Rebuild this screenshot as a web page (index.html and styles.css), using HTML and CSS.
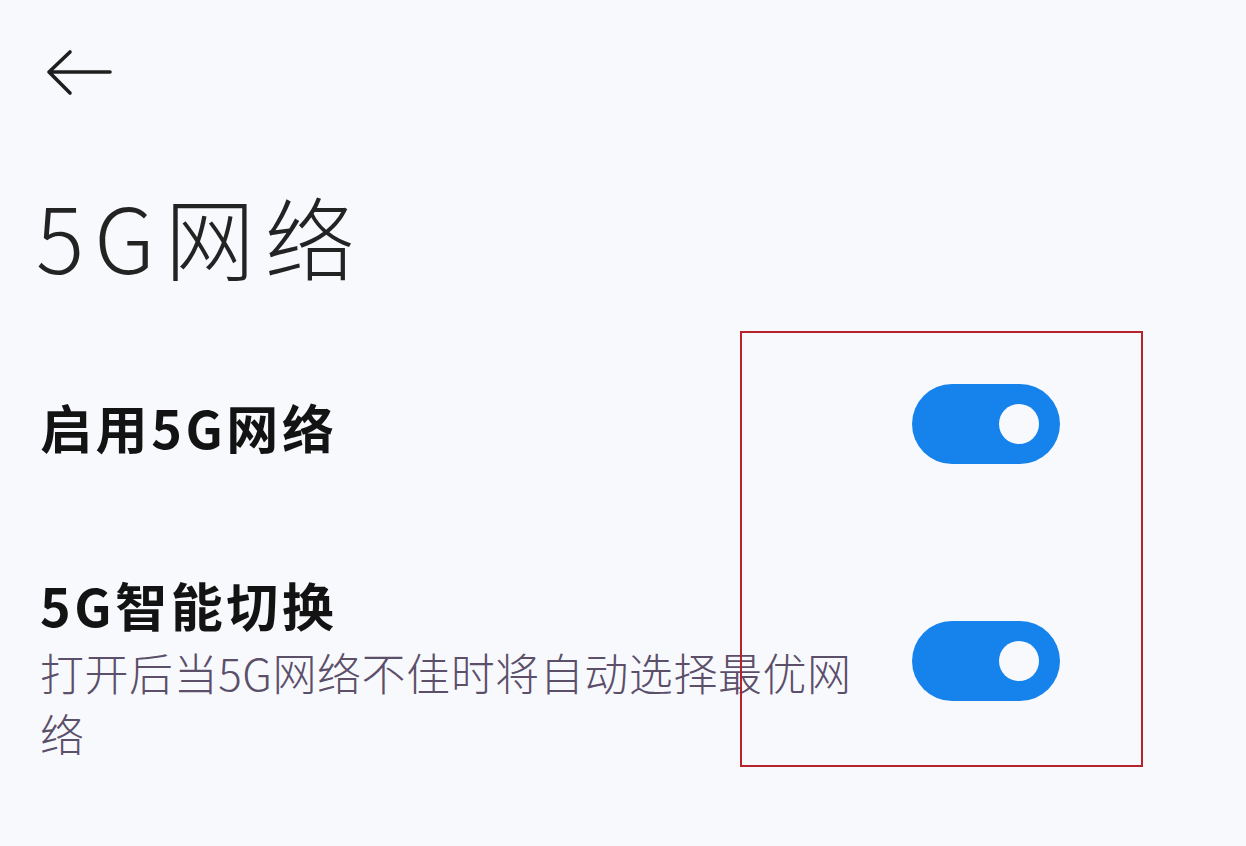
FILE: index.html
```html
<!DOCTYPE html>
<html lang="zh-CN">
<head>
<meta charset="utf-8">
<title>5G网络</title>
<link rel="stylesheet" href="styles.css">
</head>
<body>
<div class="page">
  <svg class="back" viewBox="0 0 70 50" aria-label="返回">
    <path d="M66 24 H5 M26 4 L5 24 L26 45" fill="none" stroke="#1e1e1e" stroke-width="3.6" stroke-linecap="round" stroke-linejoin="round"/>
  </svg>
  <h1 class="title">5G网络</h1>
  <div class="row row-first">
    <div class="text">
      <div class="label">启用5G网络</div>
    </div>
    <div class="toggle on"><span class="knob"></span></div>
  </div>
  <div class="row row-second">
    <div class="text">
      <div class="label">5G智能切换</div>
      <div class="desc">打开后当5G网络不佳时将自动选择最优网络</div>
    </div>
    <div class="toggle on toggle-low"><span class="knob"></span></div>
  </div>
  <div class="highlight"></div>
</div>
</body>
</html>
```
FILE: styles.css
```css
html, body {
  margin: 0;
  padding: 0;
  background: #f8f9fd;
}
body {
  font-family: "Noto Sans CJK SC", "Noto Sans", sans-serif;
  color: #151515;
}
.page {
  position: relative;
  width: 1246px;
  height: 846px;
  box-sizing: border-box;
  padding: 48px 186px 0 40px;
}
.back {
  display: block;
  width: 70px;
  height: 50px;
  margin-left: 4px;
}
.title {
  margin: 92px 0 0 -4px;
  font-size: 90px;
  line-height: 90px;
  font-weight: 300;
  letter-spacing: 10px;
  color: #232323;
}
.row {
  display: flex;
  justify-content: space-between;
}
.row-first {
  margin-top: 104px;
  align-items: center;
}
.row-first .label {
  margin-top: 6px;
}
.row-second {
  margin-top: 110px;
  align-items: flex-start;
}
.text {
  width: 830px;
}
.label {
  font-size: 52px;
  line-height: 62px;
  font-weight: 700;
  letter-spacing: 3.6px;
  color: #131313;
}
.desc {
  margin-top: 6px;
  font-size: 44px;
  line-height: 61px;
  font-weight: 300;
  letter-spacing: 0.55px;
  color: #5b4f6a;
}
.toggle {
  flex: none;
  width: 148px;
  height: 80px;
  border-radius: 40px;
  background: #1683ec;
  display: flex;
  align-items: center;
  justify-content: flex-end;
  padding-right: 21px;
  box-sizing: border-box;
}
.toggle-low {
  margin-top: 47px;
}
.knob {
  width: 40px;
  height: 40px;
  border-radius: 50%;
  background: #f7f9fc;
}
.highlight {
  position: absolute;
  left: 740px;
  top: 331px;
  width: 403px;
  height: 436px;
  box-sizing: border-box;
  border: 2px solid #b8232b;
}
```
